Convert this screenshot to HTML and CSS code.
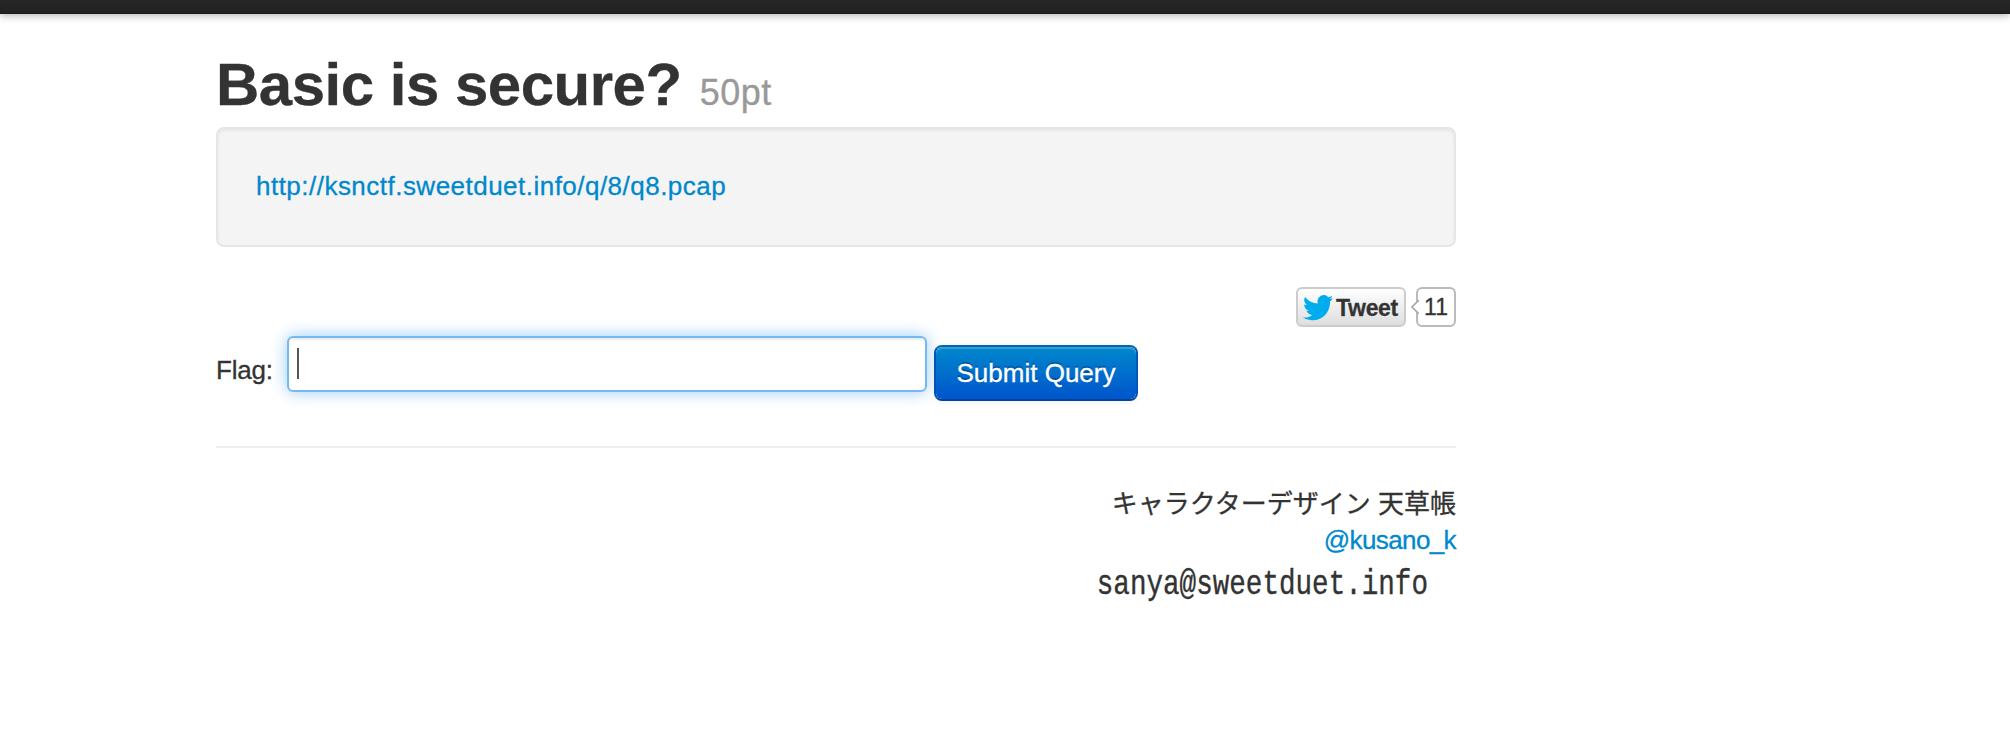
FILE: index.html
```html
<!DOCTYPE html>
<html lang="ja">
<head>
<meta charset="utf-8">
<title>Basic is secure?</title>
<link rel="stylesheet" href="styles.css">
</head>
<body>
<div class="navbar"></div>
<main class="container">
  <h1 class="title"><span class="name">Basic is secure?</span> <small>50pt</small></h1>
  <div class="well"><a class="link" href="#">http://ksnctf.sweetduet.info/q/8/q8.pcap</a></div>
  <div class="share">
    <a class="tweet" href="#">
      <svg class="bird" viewBox="0 0 30 26"><path d="M30 3.200c-1.100.5-2.200.8-3.400.9 1.300-.8 2.200-1.900 2.700-3.400-1.200.7-2.600 1.200-4 1.500A6.200 6.200 0 0 0 14.900 8.500C9.700 8.200 5.200 5.800 2.100 1.900.4 4.900 1.300 8.300 4 10.200c-1 0-2-.3-2.800-.8 0 3.200 2.200 5.500 5 6.100-.9.3-1.800.3-2.800.1.8 2.500 3 4.200 5.800 4.300C6.600 22 3.400 22.900 0 22.500c2.800 1.800 6.100 2.800 9.500 2.800C21 25.300 27.500 15.500 27 6.400c1.200-.9 2.200-1.900 3-3.200z"/></svg>
      <span class="tweet-label">Tweet</span>
    </a>
    <div class="count"><svg class="nub" viewBox="0 0 8 14"><path d="M8 0 1 7l7 7"/></svg><span class="number">11</span></div>
  </div>
  <form class="flag-form">
    <label class="flag-label">Flag:</label>
    <div class="field"><span class="caret"></span></div>
    <button class="submit" type="button">Submit Query</button>
  </form>
  <footer class="footer">
    <div class="credit">キャラクターデザイン 天草帳</div>
    <a class="link author" href="#">@kusano_k</a>
    <div class="email">sanya@sweetduet.info</div>
  </footer>
</main>
</body>
</html>
```
FILE: styles.css
```css
* { box-sizing: border-box; }
body {
  margin: 0;
  background: #fff;
  color: #333;
  font: 26px/36px "Liberation Sans", "Noto Sans CJK JP", sans-serif;
  -webkit-text-stroke: .3px;
}
.navbar {
  height: 14px;
  background: linear-gradient(#262626, #222 85%, #1c1c1c);
  box-shadow: 0 1px 8px rgba(0, 0, 0, .35);
}
.container { width: 1240px; margin-left: 216px; padding-top: 35px; }
.title { display: flex; align-items: baseline; gap: 18px; margin: 0 0 7px; height: 71px; font-size: 60px; line-height: 72px; }
.name { letter-spacing: -.5px; }
.title small { font-size: 36px; font-weight: 400; letter-spacing: .5px; color: #999; }
.link { color: #08c; text-decoration: none; }
.well {
  height: 120px;
  padding: 39px 38px;
  background: #f4f4f4;
  border: 2px solid #e6e6e6;
  border-radius: 8px;
  box-shadow: inset 0 2px 3px rgba(0, 0, 0, .06);
}
.well .link { display: block; line-height: 36px; letter-spacing: .48px; }
.share { display: flex; justify-content: flex-end; gap: 10px; padding-top: 40px; }
.tweet {
  display: flex; align-items: center; gap: 3px;
  width: 110px; height: 40px; padding-left: 5px;
  border: 2px solid #ccc; border-radius: 6px;
  background: linear-gradient(#fff, #dedede);
  color: #333; text-decoration: none;
}
.bird { width: 30px; height: 26px; margin-top: 1px; fill: #00aced; }
.tweet-label { padding-top: 2px; font-size: 23px; font-weight: 700; letter-spacing: -.3px; text-shadow: 0 1px 0 rgba(255, 255, 255, .5); }
.count {
  position: relative;
  width: 40px; height: 40px;
  border: 2px solid #bbb; border-radius: 6px;
  font-size: 23px; line-height: 36px; text-align: center;
}
.nub { position: absolute; left: -7px; top: 11px; width: 8px; height: 14px; fill: #fff; stroke: #aaa; stroke-width: 1.6; }
.flag-form { display: flex; align-items: flex-start; padding-top: 9px; height: 119px; }
.flag-label { width: 71px; padding-top: 16px; letter-spacing: -.2px; }
.field {
  width: 640px; height: 56px; padding: 10px 8px;
  border: 2px solid #75b9f0; border-radius: 6px;
  box-shadow: inset 0 2px 2px rgba(0, 0, 0, .075), 0 0 16px rgba(82, 168, 236, .6);
}
.caret { display: block; width: 2px; height: 31px; background: #555; }
.submit {
  width: 204px; height: 56px; margin: 9px 0 0 7px; padding: 0;
  border: 2px solid; border-color: #0067b0 #0055b8 #00449c; border-radius: 8px;
  background: linear-gradient(#08c, #05c) padding-box;
  box-shadow: inset 0 2px 0 rgba(255, 255, 255, .2), 0 2px 4px rgba(0, 0, 0, .05);
  color: #fff; font: inherit; text-shadow: 0 -2px 0 rgba(0, 0, 0, .25);
}
.footer { display: flex; flex-direction: column; align-items: flex-end; border-top: 2px solid #eee; padding-top: 38px; }
.credit, .author { line-height: 36px; height: 36px; }
.author { letter-spacing: -.6px; }
.email {
  margin: 7px 28px 0 0;
  font: 27.600px/40px "Liberation Mono", monospace;
  transform: scaleY(1.3);
}
```
